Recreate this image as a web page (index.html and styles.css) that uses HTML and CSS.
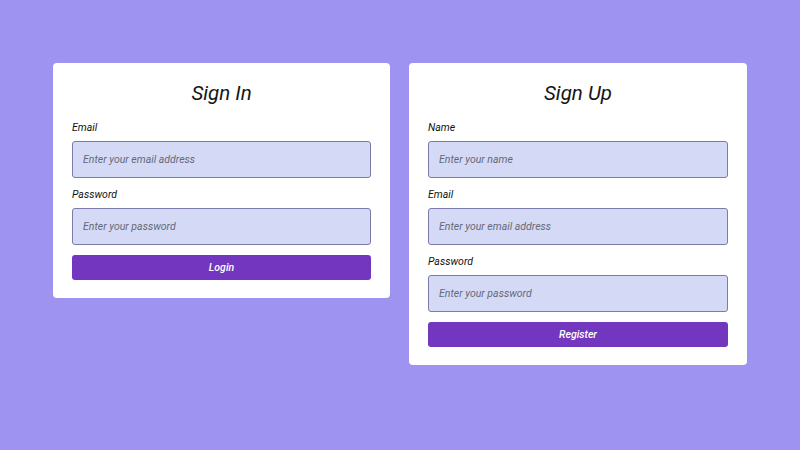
FILE: index.html
```html
<!DOCTYPE html>
<html>
<head>
<meta charset="utf-8">
<link rel="stylesheet" href="styles.css">
</head>
<body>
<div class="page">
  <form class="card">
    <h2 class="title">Sign In</h2>
    <label class="label">Email</label>
    <input class="field" type="text" placeholder="Enter your email address">
    <label class="label">Password</label>
    <input class="field" type="password" placeholder="Enter your password">
    <button class="btn" type="button">Login</button>
  </form>
  <form class="card">
    <h2 class="title">Sign Up</h2>
    <label class="label">Name</label>
    <input class="field" type="text" placeholder="Enter your name">
    <label class="label">Email</label>
    <input class="field" type="text" placeholder="Enter your email address">
    <label class="label">Password</label>
    <input class="field" type="password" placeholder="Enter your password">
    <button class="btn" type="button">Register</button>
  </form>
</div>
</body>
</html>
```
FILE: styles.css
```css
html, body {
  margin: 0;
  padding: 0;
}
body {
  background: #9f93f2;
  font-family: Roboto, "Liberation Sans", sans-serif;
  font-style: italic;
  width: 800px;
  height: 450px;
  overflow: hidden;
}
.page {
  display: flex;
  justify-content: center;
  align-items: flex-start;
  gap: 19px;
  padding-top: 63px;
}
.card {
  box-sizing: border-box;
  width: 337px;
  background: #ffffff;
  border-radius: 4px;
  padding: 16px 19px 18px;
  display: flex;
  flex-direction: column;
}
.card + .card {
  width: 338px;
}
.title {
  margin: 0 0 14px;
  text-align: center;
  font-size: 20.5px;
  line-height: 28px;
  font-weight: 400;
  color: #161616;
}
.label {
  font-size: 10.5px;
  line-height: 14px;
  font-weight: 400;
  color: #111111;
  margin-bottom: 6px;
}
.field {
  box-sizing: border-box;
  height: 37px;
  width: 100%;
  margin: 0 0 10px;
  padding: 0 10px;
  border: 1px solid #7d79a8;
  border-radius: 3px;
  background: #d4daf5;
  font-family: inherit;
  font-style: italic;
  font-size: 10.5px;
  color: #333;
  outline: none;
}
.field::placeholder {
  color: #66687a;
}
.btn {
  height: 25px;
  border: none;
  border-radius: 3px;
  background: #7337bf;
  color: #ffffff;
  font-family: inherit;
  font-style: italic;
  font-size: 10.5px;
  font-weight: 500;
  padding: 0;
  margin-top: 0;
}
```
